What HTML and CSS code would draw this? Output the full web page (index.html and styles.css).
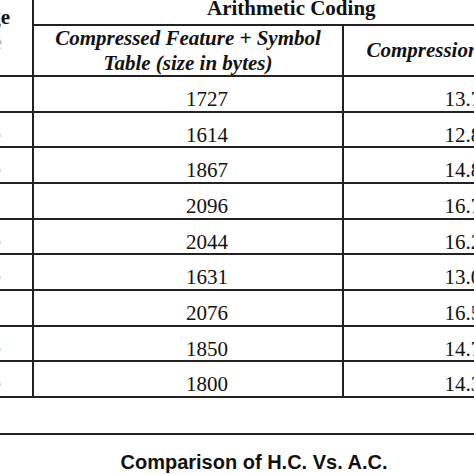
FILE: index.html
```html
<!DOCTYPE html>
<html lang="en">
<head>
<meta charset="utf-8">
<title>Comparison of H.C. Vs. A.C.</title>
<link rel="stylesheet" href="styles.css">
</head>
<body>
<div class="figure">
  <div class="table">
    <div class="cell c1 head">
      <span class="hl1">Image</span>
      <span class="hl2">Name</span>
    </div>
    <div class="cell group">Arithmetic Coding</div>
    <div class="cell c2 sub">Compressed Feature + Symbol<br>Table (size in bytes)</div>
    <div class="cell c3 sub single">Compression Ratio</div>

    <div class="cell c1 name"><span>Lena</span></div>
    <div class="cell c2 num">1727</div>
    <div class="cell c3 num">13.72</div>

    <div class="cell c1 name frag"><span>Image</span></div>
    <div class="cell c2 num">1614</div>
    <div class="cell c3 num">12.82</div>

    <div class="cell c1 name frag"><span>Image</span></div>
    <div class="cell c2 num">1867</div>
    <div class="cell c3 num">14.83</div>

    <div class="cell c1 name"><span>Boat</span></div>
    <div class="cell c2 num">2096</div>
    <div class="cell c3 num">16.74</div>

    <div class="cell c1 name frag"><span>Image</span></div>
    <div class="cell c2 num">2044</div>
    <div class="cell c3 num">16.24</div>

    <div class="cell c1 name frag"><span>Image</span></div>
    <div class="cell c2 num">1631</div>
    <div class="cell c3 num">13.05</div>

    <div class="cell c1 name"><span>Bird</span></div>
    <div class="cell c2 num">2076</div>
    <div class="cell c3 num">16.51</div>

    <div class="cell c1 name frag"><span>Image</span></div>
    <div class="cell c2 num">1850</div>
    <div class="cell c3 num">14.71</div>

    <div class="cell c1 name frag"><span>Image</span></div>
    <div class="cell c2 num">1800</div>
    <div class="cell c3 num">14.35</div>
  </div>
  <div class="rule"></div>
  <div class="caption">Comparison of H.C. Vs. A.C.</div>
</div>
</body>
</html>
```

FILE: styles.css
```css
html, body {
  margin: 0;
  padding: 0;
  background: #ffffff;
}

body {
  width: 474px;
  height: 474px;
  overflow: hidden;
  color: #111111;
}

.figure {
  width: 474px;
}

.table {
  display: grid;
  grid-template-columns: 102px 310px 210px;
  grid-template-rows: 26px 51px repeat(9, 35.67px);
  margin-left: -68px;
  width: 622px;
  font-family: "Liberation Serif", "Times New Roman", serif;
  font-size: 21px;
}

.cell {
  box-sizing: border-box;
  border-bottom: 2px solid #222222;
  overflow: hidden;
  white-space: nowrap;
}

.c1 {
  border-right: 2px solid #222222;
  grid-column: 1;
}

.c2 {
  border-right: 2px solid #222222;
  grid-column: 2;
}

.c3 {
  grid-column: 3;
}

.head {
  grid-row: 1 / 3;
  display: flex;
  flex-direction: column;
  align-items: flex-end;
  padding: 5px 22px 0 0;
  font-weight: bold;
  line-height: 25px;
}

.hl2 {
  margin-right: 8px;
  color: #bbbbbb;
}

.group {
  grid-column: 2 / 4;
  grid-row: 1;
  text-align: left;
  padding-left: 173px;
  font-weight: bold;
  line-height: 16px;
}

.sub {
  grid-row: 2;
  text-align: center;
  font-weight: bold;
  font-style: italic;
  line-height: 25px;
}

.sub.single {
  line-height: 49px;
}

.num {
  text-align: center;
  padding: 10px 0 0 38px;
  line-height: 24px;
}

.name {
  display: flex;
  justify-content: flex-end;
  padding: 10px 36px 0 0;
  line-height: 24px;
  color: #aaaaaa;
}

.name.frag {
  padding-right: 31px;
}

.rule {
  margin-top: 35px;
  border-top: 2px solid #222222;
}

.caption {
  margin-top: 17px;
  padding-left: 34px;
  text-align: center;
  font-family: "Liberation Sans", Arial, sans-serif;
  font-weight: bold;
  font-size: 20px;
  line-height: 20px;
  color: #111111;
}
```
